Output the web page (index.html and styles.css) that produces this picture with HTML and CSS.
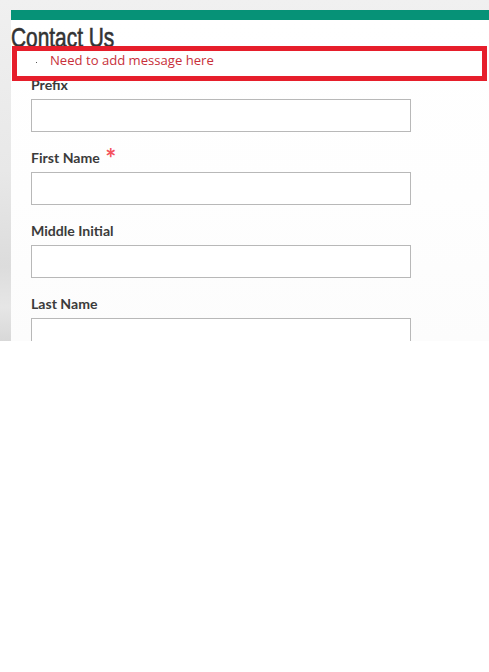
FILE: index.html
```html
<!DOCTYPE html>
<html lang="en">
<head>
  <meta charset="UTF-8" />
  <meta name="viewport" content="width=device-width, initial-scale=1" />
  <title>Contact Us</title>
  <link rel="stylesheet" href="styles.css">
</head>
<body>
  <div class="pagina">
    <div class="panel">
      <h1><span>Contact Us</span></h1>
      <form class="formulario">
        <div class="campo">
          <label>Prefix</label>
          <input type="text" name="prefix" />
        </div>
        <div class="campo">
          <label>First Name <span class="requerido">*</span></label>
          <input type="text" name="first_name" />
        </div>
        <div class="campo">
          <label>Middle Initial</label>
          <input type="text" name="middle_initial" />
        </div>
        <div class="campo">
          <label>Last Name</label>
          <input type="text" name="last_name" />
        </div>
      </form>
    </div>
    <div class="aviso">
      <span class="punto"></span>
      <span>Need to add message here</span>
    </div>
  </div>
</body>
</html>
```

FILE: styles.css
```css
* {
  margin: 0;
  padding: 0;
  box-sizing: border-box;
}
html,
body {
  background: #fff;
}
body {
  height: 672px;
  overflow: hidden;
}
.pagina {
  position: relative;
  height: 341px;
  overflow: hidden;
  padding: 10px 0 0 11px;
  background: linear-gradient(180deg, #f0f0f0 0%, #e8e8e8 50%, #dcdcdc 78%, #e6e6e6 90%, #d8d8d8 100%);
}
.panel {
  height: 100%;
  border-top: 10px solid #069277;
  background: linear-gradient(180deg, #fff 0%, #fefefe 55%, #fcfcfc 100%);
}
.panel h1 {
  height: 35px;
  font-family: "Liberation Sans", sans-serif;
  font-size: 28px;
  font-weight: 400;
  line-height: 35px;
  color: #333;
  -webkit-text-stroke: 0.6px #333;
}
.panel h1 span {
  display: inline-block;
  transform: scaleX(0.746);
  transform-origin: left center;
}
.formulario {
  padding: 20px 0 0 20px;
  width: 400px;
}
.campo {
  display: flex;
  flex-direction: column;
  margin-bottom: 16px;
}
.campo label {
  height: 20px;
  margin-bottom: 4px;
  font-family: Lato, sans-serif;
  font-size: 14.1px;
  font-weight: 700;
  line-height: 20px;
  color: #3b3b3b;
}
.campo input {
  width: 100%;
  height: 33px;
  flex: none;
  border: 1px solid #b8b8b8;
  background: #fff;
  outline: none;
}
.requerido {
  margin-left: 2px;
  font-size: 26px;
  font-weight: 700;
  line-height: 0;
  vertical-align: -5px;
  color: #f4525c;
}
.aviso {
  position: absolute;
  top: 46px;
  left: 12px;
  width: 475px;
  height: 35px;
  display: flex;
  align-items: center;
  padding: 0 0 7px 19px;
  border: 5px solid #e61e2b;
  background: #fff;
  font-family: "Open Sans", sans-serif;
  font-size: 13.1px;
  color: #c8303a;
}
.punto {
  width: 1px;
  height: 1px;
  margin: 4px 13px 0 0;
  background: #555;
}
```
